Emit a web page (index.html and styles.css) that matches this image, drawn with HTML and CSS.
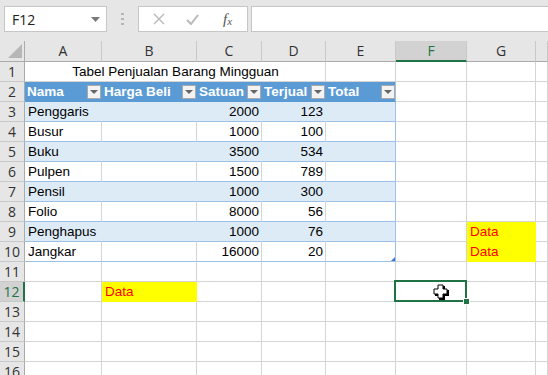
FILE: index.html
```html
<!DOCTYPE html>
<html lang="id">
<head>
<meta charset="UTF-8" />
<title>Tabel Penjualan Barang Mingguan</title>
<link rel="stylesheet" href="styles.css">
</head>
<body>

<!-- Formula bar -->
<div class="topbar">
  <div class="namebox">
    <span>F12</span>
    <svg width="9" height="5" viewBox="0 0 9 5"><path d="M0 0h9L4.5 5z" fill="#7a7a7a"/></svg>
  </div>
  <div class="grip">
    <svg width="3" height="12" viewBox="0 0 3 12"><rect y="0" width="3" height="2" fill="#b5b5b5"/><rect y="5" width="3" height="2" fill="#b5b5b5"/><rect y="10" width="3" height="2" fill="#b5b5b5"/></svg>
  </div>
  <div class="fxbox">
    <svg class="btn-x" width="12" height="12" viewBox="0 0 12 12"><path d="M1 1l10 10M11 1L1 11" stroke="#b9b9b9" stroke-width="1.4"/></svg>
    <svg class="btn-ok" width="13" height="11" viewBox="0 0 13 11"><path d="M1 6l4 4 7-9" stroke="#b9b9b9" stroke-width="2" fill="none"/></svg>
    <i class="fx">f<sub>x</sub></i>
  </div>
  <div class="formula"></div>
</div>

<!-- Sheet grid -->
<div class="sheet">
  <div class="corner"><svg width="14" height="14" viewBox="0 0 14 14"><path d="M14 0v14H0z" fill="#b7b7b7"/></svg></div>
  <div class="ch">A</div><div class="ch">B</div><div class="ch">C</div><div class="ch">D</div><div class="ch">E</div><div class="ch sel">F</div><div class="ch">G</div><div class="ch"></div>

  <div class="rh">1</div><div class="c title">Tabel Penjualan Barang Mingguan</div><div class="c"></div><div class="c"></div><div class="c"></div><div class="c"></div>

  <div class="rh">2</div>
  <div class="c th"><span>Nama</span><b class="dd"></b></div>
  <div class="c th"><span>Harga Beli</span><b class="dd"></b></div>
  <div class="c th"><span>Satuan</span><b class="dd"></b></div>
  <div class="c th"><span>Terjual</span><b class="dd"></b></div>
  <div class="c th last"><span>Total</span><b class="dd"></b></div>
  <div class="c"></div><div class="c"></div><div class="c"></div>

  <div class="rh">3</div><div class="c tb band">Penggaris</div><div class="c tb band"></div><div class="c tb band num">2000</div><div class="c tb band num">123</div><div class="c tb band last"></div><div class="c"></div><div class="c"></div><div class="c"></div>
  <div class="rh">4</div><div class="c tb">Busur</div><div class="c tb"></div><div class="c tb num">1000</div><div class="c tb num">100</div><div class="c tb last"></div><div class="c"></div><div class="c"></div><div class="c"></div>
  <div class="rh">5</div><div class="c tb band">Buku</div><div class="c tb band"></div><div class="c tb band num">3500</div><div class="c tb band num">534</div><div class="c tb band last"></div><div class="c"></div><div class="c"></div><div class="c"></div>
  <div class="rh">6</div><div class="c tb">Pulpen</div><div class="c tb"></div><div class="c tb num">1500</div><div class="c tb num">789</div><div class="c tb last"></div><div class="c"></div><div class="c"></div><div class="c"></div>
  <div class="rh">7</div><div class="c tb band">Pensil</div><div class="c tb band"></div><div class="c tb band num">1000</div><div class="c tb band num">300</div><div class="c tb band last"></div><div class="c"></div><div class="c"></div><div class="c"></div>
  <div class="rh">8</div><div class="c tb">Folio</div><div class="c tb"></div><div class="c tb num">8000</div><div class="c tb num">56</div><div class="c tb last"></div><div class="c"></div><div class="c"></div><div class="c"></div>
  <div class="rh">9</div><div class="c tb band">Penghapus</div><div class="c tb band"></div><div class="c tb band num">1000</div><div class="c tb band num">76</div><div class="c tb band last"></div><div class="c"></div><div class="c fill">Data</div><div class="c"></div>
  <div class="rh">10</div><div class="c tb">Jangkar</div><div class="c tb"></div><div class="c tb num">16000</div><div class="c tb num">20</div><div class="c tb last resize"></div><div class="c"></div><div class="c fill">Data</div><div class="c"></div>

  <div class="rh">11</div><div class="c"></div><div class="c"></div><div class="c"></div><div class="c"></div><div class="c"></div><div class="c"></div><div class="c"></div><div class="c"></div>
  <div class="rh sel">12</div><div class="c"></div><div class="c fill">Data</div><div class="c"></div><div class="c"></div><div class="c"></div><div class="c active"></div><div class="c"></div><div class="c"></div>
  <div class="rh">13</div><div class="c"></div><div class="c"></div><div class="c"></div><div class="c"></div><div class="c"></div><div class="c"></div><div class="c"></div><div class="c"></div>
  <div class="rh">14</div><div class="c"></div><div class="c"></div><div class="c"></div><div class="c"></div><div class="c"></div><div class="c"></div><div class="c"></div><div class="c"></div>
  <div class="rh">15</div><div class="c"></div><div class="c"></div><div class="c"></div><div class="c"></div><div class="c"></div><div class="c"></div><div class="c"></div><div class="c"></div>
  <div class="rh">16</div><div class="c"></div><div class="c"></div><div class="c"></div><div class="c"></div><div class="c"></div><div class="c"></div><div class="c"></div><div class="c"></div>
</div>

<!-- mouse pointer over F12 -->
<svg class="pointer" width="17" height="17" viewBox="0 0 17 17">
  <path d="M6 2h6v4h4v6h-4v4H6v-4H2V6h4z" fill="#000"/>
  <path d="M5 1h5v4h4v5h-4v4H5v-4H1V5h4z" fill="#fff" stroke="#000" stroke-width="1"/>
</svg>

</body>
</html>
```

FILE: styles.css
```css
body {
  margin: 0;
  width: 548px;
  height: 375px;
  overflow: hidden;
  background: #fff;
  font-family: "Liberation Sans", Arial, sans-serif;
  font-size: 13.5px;
  color: #000;
  position: relative;
}

/* formula bar */
.topbar {
  height: 41px;
  background: #e6e6e6;
  display: flex;
  align-items: flex-start;
  padding: 6px 0 0 4px;
  box-sizing: border-box;
}
.namebox {
  width: 103px;
  height: 26px;
  box-sizing: border-box;
  background: #fff;
  border: 1px solid #c6c6c6;
  display: flex;
  align-items: center;
  justify-content: space-between;
  padding: 0 6px 0 7px;
  font-family: "Open Sans", sans-serif;
  font-size: 14px;
  color: #222;
}
.grip {
  width: 31px;
  height: 26px;
  display: flex;
  align-items: center;
  justify-content: center;
}
.fxbox {
  width: 110px;
  height: 26px;
  box-sizing: border-box;
  background: #fff;
  border: 1px solid #c6c6c6;
  display: flex;
  align-items: center;
  padding: 0 0 0 14px;
}
.btn-ok { margin-left: 21px; }
.fx {
  margin-left: 24px;
  font-family: "Liberation Serif", serif;
  font-size: 15px;
  color: #555;
}
.fx sub { font-size: 11px; vertical-align: -1px; }
.formula {
  flex: 1;
  height: 26px;
  margin-left: 3px;
  box-sizing: border-box;
  background: #fff;
  border: 1px solid #c6c6c6;
  border-right: none;
}

/* grid */
.sheet {
  display: grid;
  grid-template-columns: 25px 77px 95px 65px 64px 70px 71px 69px 1fr;
  grid-template-rows: 21px;
  grid-auto-rows: 20px;
}
.corner, .ch, .rh {
  background: #e6e6e6;
  box-sizing: border-box;
  font-family: "Open Sans", sans-serif;
  font-size: 14px;
  color: #333;
}
.corner {
  border-right: 1px solid #ababab;
  border-bottom: 1px solid #ababab;
  display: flex;
  align-items: flex-end;
  justify-content: flex-end;
  padding: 0 2px 3px 0;
}
.ch {
  border-right: 1px solid #c8c8c8;
  border-bottom: 1px solid #ababab;
  text-align: center;
  line-height: 20px;
}
.ch.sel {
  background: #d2d2d2;
  color: #217346;
  border-bottom: 2px solid #217346;
  line-height: 19px;
}
.rh {
  border-right: 1px solid #ababab;
  border-bottom: 1px solid #c8c8c8;
  text-align: center;
  line-height: 19px;
}
.rh.sel {
  background: #d2d2d2;
  color: #217346;
  border-right: 2px solid #217346;
}

.c {
  box-sizing: border-box;
  border-right: 1px solid #d4d4d4;
  border-bottom: 1px solid #d4d4d4;
  padding: 1px 2px 0 3px;
  line-height: 18px;
  white-space: nowrap;
  overflow: hidden;
}
.title {
  grid-column: span 4;
  text-align: center;
}
.num { text-align: right; }

/* excel table */
.th {
  background: #5b9bd5;
  color: #fff;
  font-weight: bold;
  border-right-color: transparent;
  border-bottom-color: #5b9bd5;
  display: flex;
  align-items: center;
  justify-content: space-between;
  padding: 0 0 0 2px;
}
.dd {
  flex: none;
  width: 14px;
  height: 14px;
  box-sizing: border-box;
  background: #f3f3f3;
  border: 1px solid #a9a9a9;
  display: flex;
  align-items: center;
  justify-content: center;
}
.dd::after {
  content: "";
  border-left: 4px solid transparent;
  border-right: 4px solid transparent;
  border-top: 4px solid #666;
}
.tb { border-bottom-color: #9bc2e6; }
.band {
  background: #ddebf7;
  border-right-color: transparent;
}
.last { border-right-color: #9bc2e6; }
.resize { position: relative; overflow: visible; }
.resize::after {
  content: "";
  position: absolute;
  right: 0;
  bottom: 0;
  width: 0;
  height: 0;
  border-left: 4px solid transparent;
  border-bottom: 4px solid #4472c4;
}

.fill {
  background: #ffff00;
  color: #ff0000;
  border-color: transparent;
}

/* selected cell */
.active { position: relative; overflow: visible; }
.active::before {
  content: "";
  position: absolute;
  left: -2px;
  top: -2px;
  right: -1px;
  bottom: -1px;
  border: 2px solid #217346;
}
.active::after {
  content: "";
  position: absolute;
  right: -4px;
  bottom: -4px;
  width: 5px;
  height: 5px;
  background: #217346;
  border: 1px solid #fff;
}

.pointer {
  position: absolute;
  left: 433px;
  top: 284px;
}
```
